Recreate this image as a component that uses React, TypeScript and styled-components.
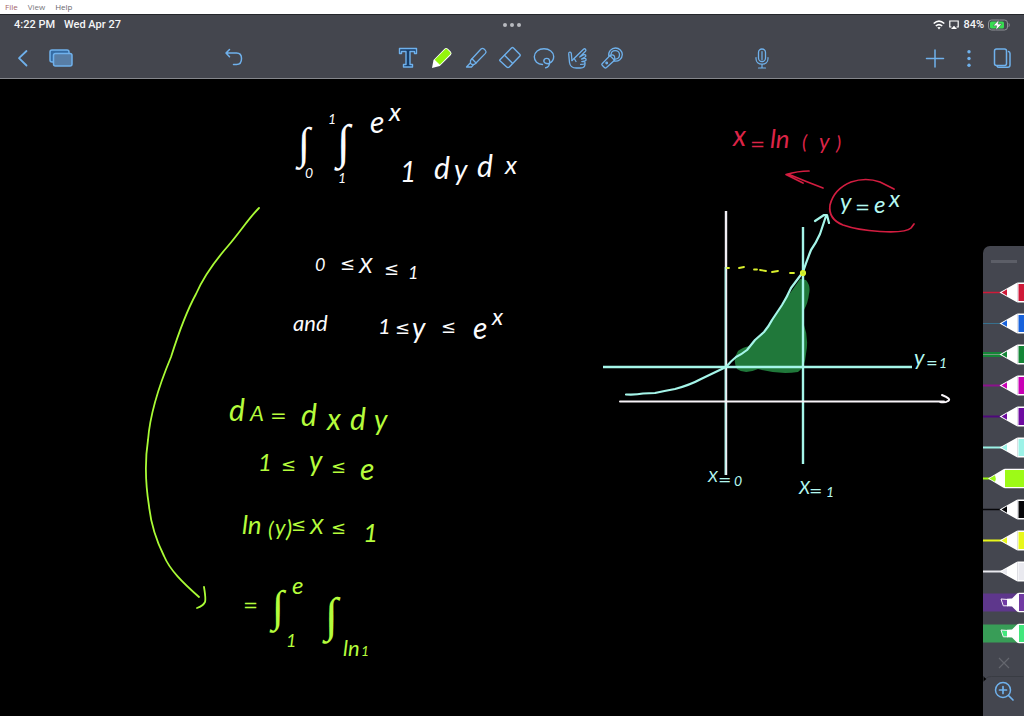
import React from "react";
import styled, { createGlobalStyle } from "styled-components";

const GlobalStyle = createGlobalStyle`
  * { box-sizing: border-box; }
  html, body { margin: 0; padding: 0; background: #000; }
  button { appearance: none; border: 0; background: none; padding: 0; margin: 0; font: inherit; color: inherit; cursor: pointer; }
`;

const Page = styled.div`
  position: relative;
  display: flex;
  flex-direction: column;
  min-height: 100vh;
  background: #000;
  font-family: Roboto, "Liberation Sans", sans-serif;
  overflow: hidden;
`;

const MenuBar = styled.nav`
  display: flex;
  align-items: center;
  gap: 10px;
  height: 14px;
  padding-left: 5px;
  background: #fff;
`;

const MenuItem = styled.button<{ $tone: string }>`
  font-family: "Open Sans", sans-serif;
  font-size: 8px;
  line-height: 14px;
  color: ${(p) => p.$tone};
`;

const Header = styled.header`
  background: #44464e;
  border-top: 1px solid #24262b;
  border-bottom: 1px solid #85878c;
`;

const StatusBar = styled.div`
  display: grid;
  grid-template-columns: 1fr auto 1fr;
  align-items: center;
  height: 19px;
  padding: 0 14px;
  color: #f4f5f7;
  font-size: 11px;
  line-height: 14px;
  font-weight: 500;
`;

const Clock = styled.div`
  display: flex;
  gap: 9px;
  white-space: nowrap;
`;

const Dots = styled.div`
  display: flex;
  gap: 3px;
`;

const Dot = styled.span`
  width: 4px;
  height: 4px;
  border-radius: 50%;
  background: #b9bbc0;
`;

const Indicators = styled.div`
  display: flex;
  align-items: center;
  justify-content: flex-end;
  gap: 4px;
`;

const Toolbar = styled.div`
  display: grid;
  grid-template-columns: 1fr auto 1fr;
  align-items: center;
  height: 44px;
  padding: 4px 4px 0 0;
`;

const ToolGroup = styled.div`
  display: flex;
  align-items: center;
`;

const NavGroup = styled(ToolGroup)`
  justify-content: space-between;
  padding: 0 140px 0 6px;
`;

const NavPair = styled(ToolGroup)`
  gap: 4px;
`;

const ActionGroup = styled(ToolGroup)`
  justify-content: space-between;
  padding-left: 116px;
`;

const IconButton = styled.button`
  display: flex;
  align-items: center;
  justify-content: center;
  width: 34px;
  height: 34px;
`;

const Glyph = styled.svg`
  display: block;
  fill: none;
  stroke: #6fb1ec;
  stroke-width: 1.5;
  stroke-linecap: round;
  stroke-linejoin: round;
`;

const Board = styled.main`
  flex: 1;
  background: #000;
`;

const Sheet = styled.svg`
  display: block;
  width: 100%;
  fill: none;
  stroke-linecap: round;
  stroke-linejoin: round;
`;

const Ink = styled.text<{ $font: string; $weight: number }>`
  font-family: ${(p) => p.$font};
  font-style: italic;
  font-weight: ${(p) => p.$weight};
  stroke: none;
`;

const Palette = styled.aside`
  position: absolute;
  right: 0;
  top: 246px;
  bottom: 0;
  width: 41px;
  display: flex;
  flex-direction: column;
  background: #44464f;
  border-top-left-radius: 7px;
`;

const Grip = styled.div`
  width: 26px;
  height: 3px;
  margin: 14px 0 14px 8px;
  background: #5c5e67;
`;

const PenButton = styled.button`
  display: block;
  width: 41px;
  height: 31px;
`;

const CloseButton = styled(IconButton)`
  width: 41px;
  height: 28px;
`;

const ZoomButton = styled(IconButton)`
  flex: 1;
  width: 41px;
  padding-bottom: 14px;
`;

type IconProps = { w?: number; h?: number; children: React.ReactNode };
const Icon = ({ w = 24, h = 24, children }: IconProps) => (
  <Glyph width={w} height={h} viewBox={`0 0 ${w} ${h}`} aria-hidden="true">
    {children}
  </Glyph>
);

const drawingTools = [
  {
    label: "Text",
    art: (
      <path
        d="M3.5 2.500h17v5h-2V5.500h-4.500V18.500h2.500v2.500h-9v-2.500H10V5.500H5.500v2h-2z"
        fill="#173d68"
        strokeWidth="1.4"
      />
    ),
  },
  {
    label: "Pen",
    art: (
      <g stroke="none">
        <path d="M2 22l1.5-8 11-11.2q1.5-1.5 3.4 0l2.8 2.8q1.7 1.7.2 3.4L9.8 20z" fill="#fff" />
        <path d="M4.7 13.8L15.2 3.3q1-.9 2 0l3 3q1 1 0 2L9.8 18.7z" fill="#93f50c" />
      </g>
    ),
  },
  {
    label: "Highlighter",
    art: (
      <g strokeWidth="1.3">
        <path d="M8 12.8L17 3q1.5-1.3 3 0l1.4 1.4q1.4 1.4 0 3L12 17z" />
        <path d="M8 12.8l-1.5 1.7v2.7l1.2 1.2h2.6L12 17M6.5 16.7L2.5 21h5l1.8-2" />
      </g>
    ),
  },
  {
    label: "Eraser",
    art: (
      <g strokeWidth="1.4">
        <path d="M2 13.7L13.5 2q1-.9 2 0l6.2 6.2q1 1 0 2L11.3 21q-1.3 1.2-2.6 0L2.2 15.1q-.8-.7-.2-1.4z" />
        <path d="M6.5 9.3l8 8" />
      </g>
    ),
  },
  {
    label: "Lasso",
    art: (
      <g strokeWidth="1.4">
        <path d="M10.5 18.5C5.5 18.4 2.3 15 2.3 10.8 2.3 6.2 6.7 2.7 12 2.7s9.7 3.4 9.7 7.7c0 3.4-2.1 5.7-4.5 6.8" />
        <path d="M17 17.7q-4.8.2-5.2-2.5c0-1.8 1.2-2.8 2.9-2.8 1.9 0 3 1.3 3 3.6 0 3-1.4 5.2-4 5.8" />
      </g>
    ),
  },
  {
    label: "Pointer",
    art: (
      <g strokeWidth="1.3">
        <path d="M6 14.500l-.7-7q-.3-1.500-1.500-1.300-1.200.2-1.100 1.700l.8 8.600c.5 3.500 3.300 5.500 6.800 5.500h4.200c3 0 4.500-1.800 4.500-4" />
        <path d="M6 14.500L17.500 3.200q1.100-.9 2 0 .9 1 0 2L13.800 11l3.900-2.200q1.400-.6 2 .4.5 1.200-.7 1.800l-3.500 2 2.900-.6q1.400-.2 1.700.9.200 1.200-1 1.500l-3.300.8 2 .1q1.400.2 1.300 1.300-.2 1.100-1.500 1.200l-3 .1M10 15.500l-1.500-2.500" />
      </g>
    ),
  },
  {
    label: "Laser pointer",
    art: (
      <g strokeWidth="1.3">
        <path d="M2.1 17.8l7.8-8.2 4.7 4.7-8.1 7.3q-1.1.9-2.1-.1l-2.2-2.2q-.8-.7-.1-1.5z" />
        <path d="M8.9 10.2C7.8 5.5 11.6 2 15.5 2c3.8 0 6.8 2.9 6.8 6.6 0 4-3.8 7.5-8.4 6.3" />
        <path d="M11 8.8c.1-2.5 2-4.1 4.2-4.1 2.4 0 4.3 1.7 4.3 4 0 2.5-1.8 4.2-4.2 4.4" />
        <path d="M9.900 9.600q2.500-1.500 4-.2 1.500 1.700.7 4.900" />
        <circle cx="6.7" cy="17" r=".8" fill="#6fb1ec" />
      </g>
    ),
  },
];

const pens = [
  { name: "Red", tint: "#cf1938", line: 1.5, kind: "pen" },
  { name: "Blue", tint: "#1862dc", line: 1, kind: "pen", wire: "#37708e" },
  { name: "Green", tint: "#158637", line: 5, kind: "pen" },
  { name: "Magenta", tint: "#c900b5", line: 2, kind: "pen", wire: "#8b128c" },
  { name: "Purple", tint: "#6e0ba0", line: 2, kind: "pen", wire: "#4e087b" },
  { name: "Aqua", tint: "#9cf2e7", line: 2, kind: "pen" },
  { name: "Lime", tint: "#9dfa17", line: 2, kind: "active" },
  { name: "Black", tint: "#060609", line: 1.5, kind: "pen" },
  { name: "Yellow", tint: "#e8f71b", line: 2, kind: "pen" },
  { name: "White", tint: "#e9e9ef", line: 2, kind: "pen" },
  { name: "Purple highlighter", tint: "#713aa3", line: 18, kind: "marker", wire: "#5e378c" },
  { name: "Green highlighter", tint: "#43e77d", line: 18, kind: "marker", wire: "#389d57" },
];

const PenArt = ({ pen }: { pen: (typeof pens)[number] }) => {
  const wire = pen.wire ?? pen.tint;
  const reach = pen.kind === "active" ? 7 : pen.kind === "marker" ? 41 : 19;
  return (
    <svg width="41" height="31" viewBox="0 0 41 31" aria-hidden="true">
      <path d={`M0 15.5h${reach}`} stroke={wire} strokeWidth={pen.line} />
      {pen.name === "Green" && <path d="M0 15.5h18" stroke="#75967f" strokeWidth="1" />}
      {pen.kind === "pen" && (
        <>
          <path d="M16.5 15.5L33 6.3q1-.7 2-.7h7v19.8h-7q-1 0-2-.7z" fill="#fff" />
          <path d="M18.6 15.5l5.400-3.200v6.400z" fill={pen.tint} />
          <path d="M35.500 7h6v17h-6z" fill={pen.tint} />
          <path d="M34.5 6.2v18.6" stroke="#c8c8d0" strokeWidth=".6" />
        </>
      )}
      {pen.kind === "active" && (
        <>
          <path d="M5 15.5L20 6.6q1-.8 2-.8h19v19.4H22q-1 0-2-.8z" fill="#fff" />
          <path d="M6.5 15.5l5.5-3.3q1.5 3.3 0 6.6z" fill={pen.tint} />
          <path d="M22 7h19v17H22z" fill={pen.tint} />
        </>
      )}
      {pen.kind === "marker" && (
        <>
          <path d="M18 12l7 .5v6.300h-4.700z" fill={pen.tint} stroke="#f3edf7" strokeWidth="1" />
          <path d="M24 11.800l5-.2 5-5q.8-.8 2-.8h5v19.4h-5q-1 0-2-.8l-5-4.800-5-.3z" fill="#fff" />
          <path d="M36 7h5v17h-5z" fill={pen.tint} />
        </>
      )}
    </svg>
  );
};

type Note = [text: string, x: number, y: number, size: number];

const hand = '"Lato", "Noto Sans", sans-serif';
const mathHand = '"DejaVu Sans", sans-serif';
const serifHand = '"Liberation Serif", serif';

const whiteNotes: Note[] = [
  ["∫", 298, 158, 44], ["1", 328, 124, 14], ["0", 305, 178, 14],
  ["∫", 337, 158, 48], ["1", 338, 183, 14], ["e", 370, 133, 30], ["x", 389, 121, 26],
  ["1", 400, 182, 28], ["d", 434, 179, 30], ["y", 454, 180, 28], ["d", 477, 177, 30], ["x", 505, 174, 26],
  ["0", 315, 271, 18], ["≤", 340, 270, 18], ["X", 359, 273, 22], ["≤", 384, 275, 18], ["1", 408, 279, 18],
  ["and", 293, 331, 22], ["1", 378, 334, 22], ["≤", 395, 334, 18], ["y", 412, 338, 28],
  ["≤", 441, 333, 18], ["e", 473, 339, 30], ["x", 492, 325, 24],
];

const limeNotes: Note[] = [
  ["d", 229, 421, 30], ["A", 250, 421, 22], ["=", 270, 422, 20], ["d", 301, 426, 30], ["x", 327, 430, 30],
  ["d", 350, 430, 30], ["y", 374, 430, 28],
  ["1", 258, 471, 24], ["≤", 281, 471, 18], ["y", 309, 471, 28], ["≤", 331, 473, 18], ["e", 360, 480, 30],
  ["ln", 242, 534, 26], ["(", 268, 537, 22], ["y", 275, 535, 22], [")", 286, 537, 24],
  ["≤", 291, 531, 18], ["X", 310, 534, 22], ["≤", 331, 534, 18], ["1", 363, 542, 26],
  ["=", 243, 611, 18], ["∫", 272, 621, 44], ["e", 292, 594, 24], ["1", 286, 647, 18],
  ["∫", 325, 631, 48], ["ln", 343, 656, 22], ["1", 361, 656, 14],
];

const redNotes: Note[] = [
  ["x", 733, 146, 28], ["=", 750, 150, 18], ["ln", 770, 148, 26], ["(", 802, 149, 20],
  ["y", 819, 149, 22], [")", 836, 150, 20],
];

const aquaNotes: Note[] = [
  ["y", 840, 210, 24], ["=", 855, 213, 18], ["e", 874, 213, 24], ["x", 889, 207, 24],
  ["y", 914, 365, 22], ["=", 926, 368, 14], ["1", 939, 368, 14],
  ["X", 708, 482, 16], ["=", 718, 485, 16], ["0", 734, 486, 14],
  ["X", 799, 494, 18], ["=", 809, 496, 16], ["1", 826, 497, 14],
];

const NoteLayer = ({ notes, color }: { notes: Note[]; color: string }) => (
  <g fill={color}>
    {notes.map(([text, x, y, size], i) => {
      const font = text === "∫" ? serifHand : text === "≤" || text === "=" ? mathHand : hand;
      return (
        <Ink key={i} x={x} y={y} fontSize={size} $font={font} $weight={400}>
          {text}
        </Ink>
      );
    })}
  </g>
);

export default function App() {
  return (
    <Page>
      <GlobalStyle />
      <MenuBar aria-label="Menu">
        <MenuItem $tone="#a4636b">File</MenuItem>
        <MenuItem $tone="#77777b">View</MenuItem>
        <MenuItem $tone="#68686c">Help</MenuItem>
      </MenuBar>

      <Header>
        <StatusBar>
          <Clock>
            <span>4:22 PM</span>
            <span>Wed Apr 27</span>
          </Clock>
          <Dots>
            <Dot />
            <Dot />
            <Dot />
          </Dots>
          <Indicators>
            <svg width="12" height="10" viewBox="0 0 12 10" fill="none" stroke="#fff" strokeWidth="1.6" aria-hidden="true">
              <path d="M.7 3.5q5.3-4.6 10.6 0M2.8 6q3.2-2.8 6.4 0" />
              <path d="M4.3 7.6q1.7-1.3 3.4 0L6 9.4z" fill="#fff" stroke="none" />
            </svg>
            <svg width="10" height="10" viewBox="0 0 10 10" aria-hidden="true">
              <path d="M2.5 7H.8V1h8.4v6H7.5" fill="none" stroke="#fff" strokeWidth="1.2" />
              <path d="M5 5.7l3 3.4H2z" fill="#fff" />
            </svg>
            <span>84%</span>
            <svg width="22" height="12" viewBox="0 0 22 12" aria-hidden="true">
              <rect x=".5" y="1" width="19" height="10" rx="3" fill="none" stroke="#8d9095" />
              <rect x="2" y="2.500" width="14" height="7" rx="1.500" fill="#37dc51" />
              <path d="M20.8 4.300q1 1.700 0 3.400" fill="none" stroke="#8d9095" />
              <path d="M11 .7L5.2 6.8h3.500L7.800 11.300l6-6.200h-3.700z" fill="#fff" stroke="#44464e" strokeWidth=".5" />
            </svg>
          </Indicators>
        </StatusBar>

        <Toolbar role="toolbar" aria-label="Drawing tools">
          <NavGroup>
            <NavPair>
              <IconButton aria-label="Back">
                <Icon><path d="M15.5 5L8 12.2l7.5 7.3" strokeWidth="1.8" /></Icon>
              </IconButton>
              <IconButton aria-label="Documents">
                <Icon w={26}>
                  <rect x="2" y="4" width="19" height="12" rx="2" fill="#356ca4" />
                  <rect x="5.5" y="7.5" width="18.5" height="12.5" rx="2" fill="#587ea6" />
                </Icon>
              </IconButton>
            </NavPair>
            <IconButton aria-label="Undo">
              <Icon><path d="M7.5 3.5L4 7l3.5 3.7M4.3 7h10.2c3.3 0 5 2.3 5 5.5 0 3.6-1.8 6-5 6h-3" /></Icon>
            </IconButton>
          </NavGroup>

          <ToolGroup>
            {drawingTools.map((tool) => (
              <IconButton key={tool.label} aria-label={tool.label}>
                <Icon>{tool.art}</Icon>
              </IconButton>
            ))}
          </ToolGroup>

          <ActionGroup>
            <IconButton aria-label="Record">
              <Icon>
                <rect x="8.5" y="3" width="7" height="12.5" rx="3.5" strokeWidth="1.3" />
                <path d="M6 11.5v1.3c0 3.2 2.5 5.4 6 5.4s6-2.2 6-5.4v-1.3M12 18.2V22M8.5 22h7M12 5.5v8" strokeWidth="1.2" />
              </Icon>
            </IconButton>
            <ToolGroup>
              <IconButton aria-label="Add">
                <Icon><path d="M12 4v17M3.5 12.5h17" /></Icon>
              </IconButton>
              <IconButton aria-label="More">
                <Icon>
                  <g fill="#6fb1ec" stroke="none">
                    <circle cx="12" cy="5.700" r="1.7" />
                    <circle cx="12" cy="12.500" r="1.7" />
                    <circle cx="12" cy="19.300" r="1.7" />
                  </g>
                </Icon>
              </IconButton>
              <IconButton aria-label="Pages">
                <Icon>
                  <rect x="3.500" y="3" width="12" height="16.5" rx="2" />
                  <path d="M17.500 5.500q1.500.4 1.500 2v11.500q0 2.300-2.300 2.300H8q-1.500 0-2-1.400" />
                </Icon>
              </IconButton>
            </ToolGroup>
          </ActionGroup>
        </Toolbar>
      </Header>

      <Board>
        <Sheet viewBox="0 79 1024 637">
          {/* shaded region between the curve, y=1 and x=1 */}
          <path
            d="M800 279L806 280Q811 286 809 294Q808 303 804 310V325Q809 338 806 354Q805 368 798 372Q779 375 758 369Q745 375 737 369Q732 360 738 351Q743 347 750 346L765 331L781 306Z"
            fill="#20783a"
          />
          <g stroke="#a5f5e9" strokeWidth="2.4" strokeLinecap="butt">
            <path d="M603 367H912" />
            <path d="M803 227V464" />
          </g>
          <path d="M726 211V475" stroke="#f1eef4" strokeWidth="2.4" strokeLinecap="butt" />
          <path d="M725.2 267V475" stroke="#a5f5e9" strokeWidth="1" strokeLinecap="butt" />
          <path d="M620 401.5H944M942 395Q952 399 948 401Q945 403 940 402" stroke="#f8f4f8" strokeWidth="2" />
          <path
            d="M626 394.500Q636 395 643 393.500L655 393Q664 391 675 389Q690 385 701 379L726 367Q731 361 736 357Q742 354 747 350L755 340L764 332Q769 326 772 320L782 305Q787 297 791 288L803 272Q807 260 811 250Q816 243 820 234L826 216M815 221L824 215L827 215L829 223"
            stroke="#a5f5e9"
            strokeWidth="2.2"
          />
          <g stroke="#d9ef2d" strokeWidth="1.8">
            <path d="M727 268h2M739 268l5-1M754 269.5h3M760 270l6 1M772 272l6-1M790 273h4" />
            <circle cx="803" cy="273" r="2.2" fill="#bce82b" />
          </g>
          <g stroke="#d31d40" strokeWidth="1.7">
            <path d="M823 188L805 181L788 174M809 171Q798 171 786 174.500Q793 178 803 183" />
            <path d="M894 189L880 182Q866 177 851 182Q834 189 830 205Q828 219 843 225Q857 230 880 231.500Q906 233 911 228L914 224" />
          </g>
          <path
            d="M259 208C249 218 240 232 228 246C214 262 203 278 196 294C184 316 177 338 171 357C158 388 150 414 148 440C144 466 146 487 149 506C151 525 157 542 164 556C170 570 182 582 199 597M204 587Q206 599 205 602Q203 606 197 608"
            stroke="#a9fb35"
            strokeWidth="1.8"
          />
          <NoteLayer notes={whiteNotes} color="#fbfbfd" />
          <NoteLayer notes={limeNotes} color="#b5fc3c" />
          <NoteLayer notes={redNotes} color="#dc2447" />
          <NoteLayer notes={aquaNotes} color="#b4f8f0" />
        </Sheet>
      </Board>

      <Palette aria-label="Pens">
        <Grip />
        {pens.map((pen) => (
          <PenButton key={pen.name} aria-label={pen.name}>
            <PenArt pen={pen} />
          </PenButton>
        ))}
        <CloseButton aria-label="Close palette">
          <svg width="12" height="12" viewBox="0 0 12 12" stroke="#64666e" strokeWidth="1.2" aria-hidden="true">
            <path d="M1 1l10 10M11 1L1 11" />
          </svg>
        </CloseButton>
        <svg width="41" height="6" viewBox="0 0 41 6" aria-hidden="true">
          <path d="M0 0Q1 2 3 3Q1 4 0 6z" fill="#000" />
          <path d="M3 2Q5 .5 8 .5h33" fill="none" stroke="#3a3c43" />
        </svg>
        <ZoomButton aria-label="Zoom in">
          <Icon>
            <circle cx="11" cy="10" r="7.5" />
            <path d="M11 6.500v7M7.500 10h7M16.500 15.500l4.500 4.500" strokeWidth="1.7" />
          </Icon>
        </ZoomButton>
      </Palette>
    </Page>
  );
}
